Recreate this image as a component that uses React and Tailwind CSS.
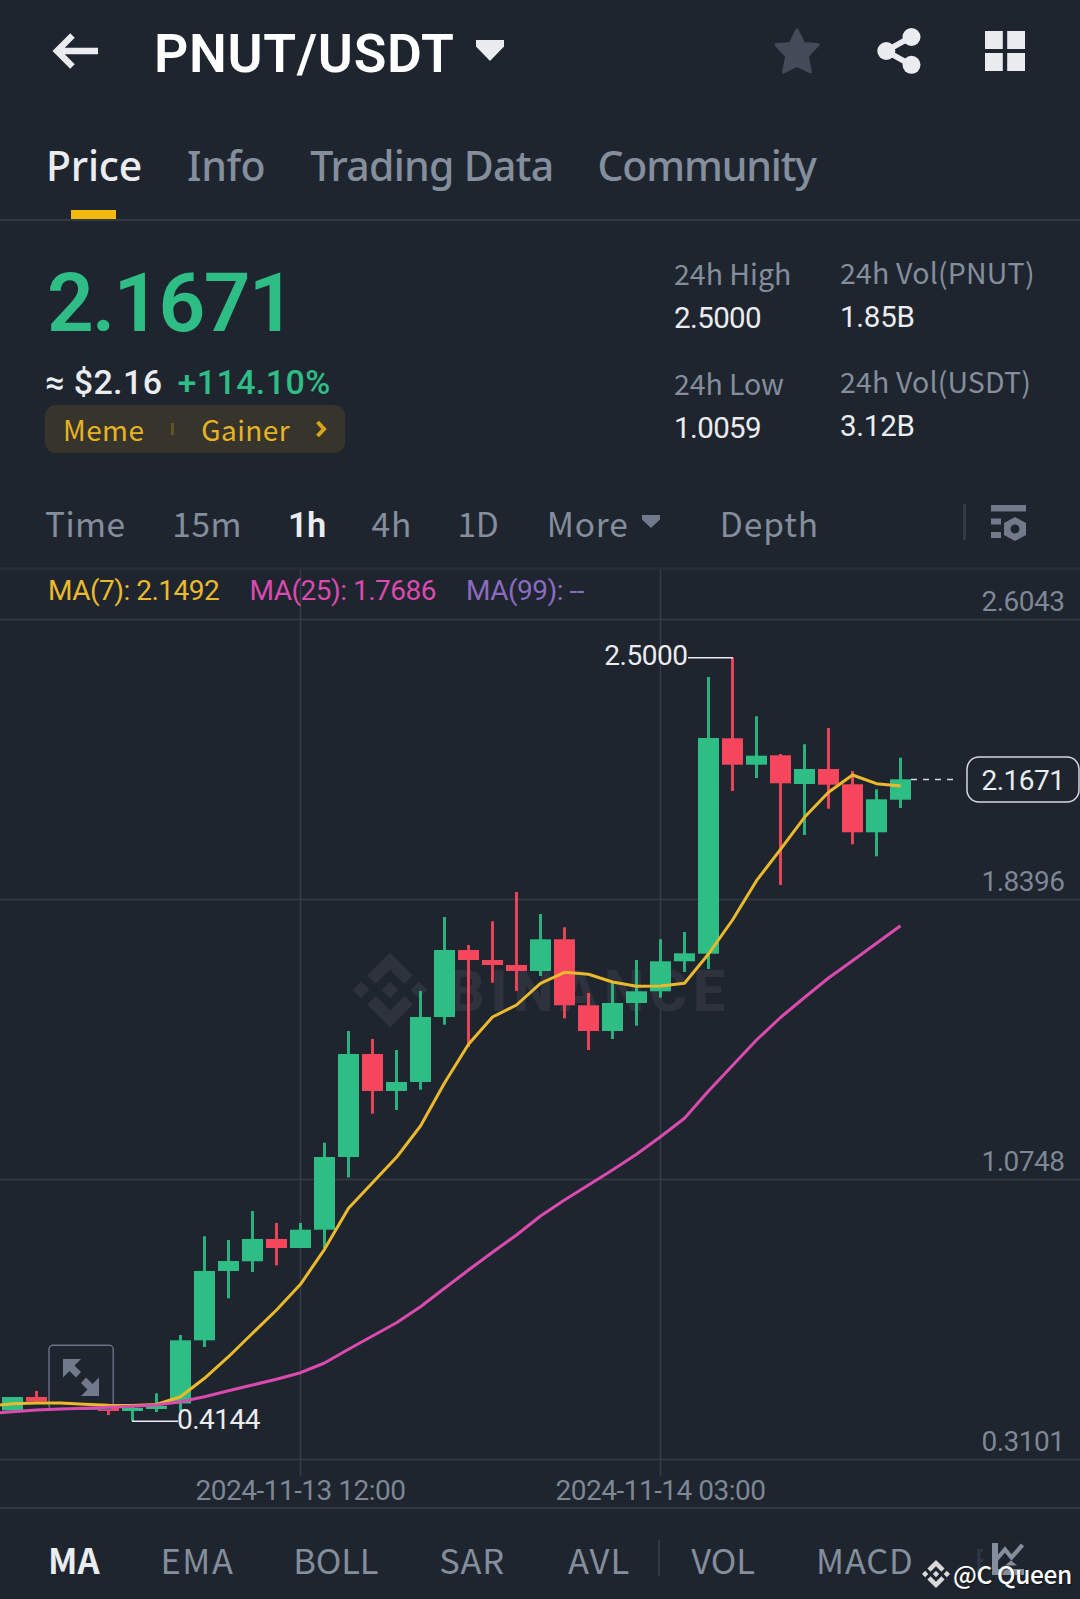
import React from 'react'
import clsx from 'clsx'

// x spacing between candles and x of the first candle centre
const STEP = 24
const FIRST_X = 12.5
const BODY_W = 21

// [up, bodyTop, bodyBottom, wickTop, wickBottom]
const candles = [
  [1, 1397, 1410.5, 1397, 1410.5],
  [0, 1397, 1401.5, 1391, 1401.5],
  [0, 1401, 1404, 1399, 1406],
  [0, 1404, 1408, 1401, 1410],
  [0, 1408, 1411, 1406, 1415],
  [1, 1408, 1411, 1406, 1421],
  [1, 1406, 1409, 1393.3, 1412],
  [1, 1340.3, 1403.5, 1335, 1411],
  [1, 1271, 1340.3, 1236.3, 1347],
  [1, 1261, 1271, 1240, 1298.3],
  [1, 1239, 1261.3, 1211, 1272],
  [0, 1239, 1248, 1223, 1265.3],
  [1, 1229.7, 1248, 1223, 1248],
  [1, 1157, 1229.7, 1142.7, 1248],
  [1, 1054, 1157, 1031, 1177.5],
  [0, 1054, 1091, 1039, 1113.7],
  [1, 1082, 1091, 1050, 1110],
  [1, 1017, 1082, 991, 1089.7],
  [1, 950, 1017, 917, 1024.7],
  [0, 950, 960, 945, 1047],
  [0, 960, 965, 921.3, 982.7],
  [0, 965, 971, 892, 991],
  [1, 939.3, 971, 914, 976],
  [0, 939.3, 1005.3, 927.3, 1018.3],
  [0, 1005.3, 1031, 993, 1050],
  [1, 1003, 1031, 983, 1039],
  [1, 991.3, 1003, 960, 1025.7],
  [1, 961.3, 991.3, 939.3, 997.7],
  [1, 953.3, 961.3, 932, 972],
  [1, 738, 953.7, 677, 969],
  [0, 738.3, 764.7, 657.7, 791],
  [1, 755.7, 764.7, 716.3, 778],
  [0, 755.3, 783.3, 754, 885],
  [1, 769, 784, 744.3, 835],
  [0, 769, 784.7, 728, 808.7],
  [0, 784.3, 832.3, 771, 844.3],
  [1, 799.3, 832.3, 789.3, 856.3],
  [1, 779.3, 799.7, 757.7, 808],
]

const ma7 = [
  1403.7, 1403, 1403, 1404.3, 1405.3, 1405.5, 1404.5, 1396.7, 1378.3, 1356.7, 1333.3, 1310, 1284.3,
  1249.3, 1208.3, 1182.7, 1157.3, 1126, 1083, 1044.3, 1017, 1005, 983.3, 972.3, 974.3, 982, 986.3,
  986, 983.3, 954, 920, 880.7, 849.3, 817.3, 792.3, 775, 783.7, 786,
]

const ma25 = [
  1411.7, 1410, 1409, 1408.3, 1407.3, 1406.3, 1405, 1401.7, 1396.7, 1390.7, 1385, 1379.3, 1372.7,
  1363, 1349.3, 1336, 1322.7, 1306.7, 1288.3, 1270, 1252.3, 1235, 1216, 1200, 1185, 1170, 1154.3,
  1136.7, 1118.3, 1091, 1065.5, 1040, 1017.5, 997.5, 978, 960.7, 943.3, 925.7,
]

const gridRows = [
  { y: 619.5, label: '2.6043' },
  { y: 899.5, label: '1.8396' },
  { y: 1179.5, label: '1.0748' },
  { y: 1459.5, label: '0.3101' },
]

const gridCols = [
  { x: 300.5, label: '2024-11-13 12:00' },
  { x: 660.5, label: '2024-11-14 03:00' },
]

const tabs = [
  { label: 'Price', cls: 'ml-[46px] tracking-[-0.2px] text-[#eaecef]', active: true },
  { label: 'Info', cls: 'ml-[45px] tracking-[-0.45px]' },
  { label: 'Trading Data', cls: 'ml-[45px] tracking-[-0.72px]' },
  { label: 'Community', cls: 'ml-[44px] tracking-[-1.12px]' },
]

const intervals = [
  { label: 'Time', cls: 'ml-[45px] tracking-[0.37px]' },
  { label: '15m', cls: 'ml-[47px] tracking-[0.5px]' },
  { label: '1h', cls: 'ml-[46px] tracking-[-0.8px]', active: true },
  { label: '4h', cls: 'ml-[46px] tracking-[1px]' },
  { label: '1D', cls: 'ml-[45px] tracking-[-0.2px]' },
  { label: 'More', cls: 'ml-[48px] tracking-[0.86px]', menu: true },
  { label: 'Depth', cls: 'ml-[60px] tracking-[0.9px]' },
]

const overlays = [
  { label: 'MA', cls: 'ml-[48px] tracking-[0px] font-semibold text-[#eaecef]' },
  { label: 'EMA', cls: 'ml-[61px] tracking-[1.5px]' },
  { label: 'BOLL', cls: 'ml-[59px] tracking-[-0.2px]' },
  { label: 'SAR', cls: 'ml-[61px] tracking-[0.73px]' },
  { label: 'AVL', cls: 'ml-[63px] tracking-[1.1px]' },
]

const LOGO =
  'M16.624 13.92l2.7175 2.7154-7.353 7.353-7.353-7.352 2.7175-2.7164 4.6355 4.6595 4.6356-4.6595zm4.6366-4.6366L24 12l-2.7154 2.7164L18.5682 12l2.6924-2.7164zm-9.272.001l2.7163 2.6914-2.7164 2.7174L9.2721 12l2.7164-2.7154zm-9.2722-.001L5.4088 12l-2.6914 2.6924L0 12l2.7164-2.7164zM11.9885.0115l7.353 7.329-2.7174 2.7154-4.6356-4.6356-4.6355 4.6595-2.7174-2.7154 7.353-7.353z'

const linePath = (values, startY) =>
  `M0 ${startY} ` + values.map((y, i) => `L${FIRST_X + i * STEP} ${y}`).join(' ')

function Header() {
  return (
    <header className="h-[102px] flex items-center text-[#eaecef]">
      <svg className="ml-[52px] w-[47px] h-[36px]" viewBox="0 0 47 36" fill="none" stroke="currentColor" strokeWidth="6.4">
        <path d="M20.5 2.5L5 18l15.500 15.500M5 18h41" />
      </svg>
      <h1 className="ml-[55px] pt-[5px] font-semibold text-[53.5px] leading-[64px] tracking-[0.66px] text-white">PNUT/USDT</h1>
      <svg className="ml-[21px] -mt-px w-[28px] h-[21px]" viewBox="0 0 28 21" fill="currentColor">
        <path d="M0 0h28v6.500L14 21 0 6.500z" />
      </svg>
      <svg className="ml-auto w-[46px] h-[46px] text-[#444c5a]" viewBox="0 0 46 46" fill="currentColor" stroke="currentColor" strokeWidth="3" strokeLinejoin="round">
        <path d="M23 2l6.600 13.400 14.400 1.300-10.800 11.400 3.300 15.900L23 37.300 9.500 44l3.300-15.900L2 16.700l14.400-1.300z" />
      </svg>
      <svg className="ml-[57px] w-[44px] h-[46px]" viewBox="0 0 44 46" fill="currentColor">
        <path d="M34 9L9 23l25 14" fill="none" stroke="currentColor" strokeWidth="5.600" />
        <circle cx="34.500" cy="9" r="9" />
        <circle cx="9.300" cy="23" r="9" />
        <circle cx="34.500" cy="36.800" r="9" />
      </svg>
      <svg className="ml-[64px] mr-[55px] w-[40px] h-[40px]" viewBox="0 0 40 40" fill="currentColor">
        <path d="M0 0h17.800v18H0zM22.200 0H40v18H22.200zM0 22h17.800v18H0zM22.200 22H40v18H22.200z" />
      </svg>
    </header>
  )
}

function Tabs() {
  return (
    <nav className="h-[119px] flex border-b-2 border-[#323944] font-['Noto_Sans',sans-serif] font-medium text-[41px] text-[#848e9c]">
      {tabs.map((tab) => (
        <div key={tab.label} className={clsx('relative pt-[33px] leading-[60px] whitespace-nowrap', tab.cls)}>
          {tab.label}
          {tab.active && <span className="absolute bottom-0 left-[25px] w-[45px] h-[9px] bg-[#f0b90b]" />}
        </div>
      ))}
    </nav>
  )
}

function Stat({ label, value, labelCls, valueCls }) {
  return (
    <div>
      <p className={clsx("font-['Noto_Sans_CJK_SC',sans-serif] text-[28.5px] leading-[36px] whitespace-nowrap text-[#848e9c]", labelCls)}>{label}</p>
      <p className={clsx('mt-[9px] text-[29.5px] leading-[36px] text-[#eaecef]', valueCls)}>{value}</p>
    </div>
  )
}

function Summary() {
  return (
    <section className="h-[259px] flex">
      <div className="ml-[45px] w-[629px] pt-[40px]">
        <p className="pl-[2px] font-semibold text-[82px] leading-[84px] tracking-[-1.8px] text-[#2ebd85]">2.1671</p>
        <p className="mt-[15px] flex font-medium text-[34px] leading-[44px] tracking-[0.4px]">
          <span className="text-[#eaecef]">≈ $2.16</span>
          <span className="ml-[15px] text-[#2ebd85]">+114.10%</span>
        </p>
        <div className="mt-px w-[300px] h-[48px] flex items-center rounded-[11px] bg-[#36342b] font-['Noto_Sans_CJK_SC',sans-serif] text-[28px] leading-[46px] tracking-[0.4px] text-[#e6b325]">
          <span className="ml-[18px] pb-px">Meme</span>
          <span className="ml-[27px] w-[3px] h-[12px] bg-[#665222]" />
          <span className="ml-[27px] pb-px">Gainer</span>
          <svg className="ml-[25px] w-[13px] h-[18px]" viewBox="0 0 13 18" fill="none" stroke="#d9a41a" strokeWidth="4">
            <path d="M2.500 2l6.500 7-6.500 7" />
          </svg>
        </div>
      </div>
      <div className="w-[166px] pt-[34px] flex flex-col gap-[29px]">
        <Stat label="24h High" value="2.5000" valueCls="tracking-[-0.6px]" />
        <Stat label="24h Low" value="1.0059" labelCls="tracking-[-0.1px]" valueCls="tracking-[-0.6px]" />
      </div>
      <div className="pt-[33px] flex flex-col gap-[28px]">
        <Stat label="24h Vol(PNUT)" value="1.85B" labelCls="tracking-[0.2px]" valueCls="tracking-[-0.25px]" />
        <Stat label="24h Vol(USDT)" value="3.12B" labelCls="tracking-[0.15px]" valueCls="tracking-[-0.25px]" />
      </div>
    </section>
  )
}

function Intervals() {
  return (
    <div className="h-[87px] pt-[21px] flex items-start text-[#848e9c]">
      <div className="flex items-baseline">
        {intervals.map((item) => (
          <div
            key={item.label}
            className={clsx(
              'flex items-baseline leading-[44px]',
              item.active
                ? 'font-semibold text-[34.5px] text-[#eaecef]'
                : "font-['Noto_Sans_CJK_SC',sans-serif] text-[33.5px]",
              item.cls
            )}
          >
            {item.label}
            {item.menu && (
              <svg className="ml-[13px] self-start mt-[14px] w-[18px] h-[13px]" viewBox="0 0 18 13" fill="#707a8a">
                <path d="M0 0h18v4.500L9 13 0 4.500z" />
              </svg>
            )}
          </div>
        ))}
      </div>
      <div className="ml-auto mt-[3px] w-[3px] h-[36px] bg-[#323944]" />
      <svg className="ml-[25px] mr-[54px] mt-[4px] w-[35px] h-[36px]" viewBox="0 0 35 36" fill="#707a8a">
        <path d="M0 0h35v6.500H0zM0 13.500h10v6H0zM0 27h10v6H0z" />
        <path fillRule="evenodd" d="M24 12l11 6v12l-11 6-11-6V18zm0 7.500a4.500 4.500 0 100 9 4.500 4.500 0 000-9z" />
      </svg>
    </div>
  )
}

function Chart() {
  return (
    <svg className="block w-[1080px] h-[940px] border-t-[3px] border-[#272d38]" viewBox="0 570 1080 937" fontSize="28" letterSpacing="-0.5">
      <g stroke="#363c48" strokeWidth="1.5">
        {gridRows.map((row) => <line key={row.y} x1="0" x2="1080" y1={row.y} y2={row.y} />)}
        {gridCols.map((col) => <line key={col.x} x1={col.x} x2={col.x} y1="570" y2="1476" />)}
      </g>

      {/* Watermark under the candles */}
      <g fill="#2d323d">
        <path transform="translate(352.700 952.700) scale(3.11)" d={LOGO} />
        <text x="448" y="1010.500" fontSize="57" fontWeight="800" textLength="277" letterSpacing="0">BINANCE</text>
      </g>

      {candles.map(([up, top, bottom, high, low], i) => {
        const x = FIRST_X + i * STEP
        return (
          <g key={i} fill={up ? '#2ebd85' : '#f6465d'}>
            <rect x={x - 1.5} y={high} width="3" height={low - high} opacity="0.92" />
            <rect x={x - BODY_W / 2} y={top} width={BODY_W} height={bottom - top} />
          </g>
        )
      })}

      {/* Fullscreen button */}
      <rect x="49" y="1345.200" width="64.200" height="64.200" rx="4" fill="#1f252f" stroke="#687284" strokeWidth="1.400" />
      <path
        d="M63 1359h18l-6.500 6.500 6.500 6.500-5 5.500-6.500-6.500-6.500 6.500zM99 1396H81l6.500-6.500-6.500-6.500 5-5.500 6.500 6.500 6.500-6.500z"
        fill="#707a8a"
      />

      <g fill="none" strokeWidth="3" strokeLinejoin="round">
        <path d={linePath(ma7, 1405)} stroke="#ebba2c" />
        <path d={linePath(ma25, 1412.7)} stroke="#db4aae" />
      </g>

      {/* High and low markers */}
      <g fill="#eaecef" stroke="none">
        <rect x="688" y="657" width="45" height="1.500" />
        <text x="604.300" y="665">2.5000</text>
        <rect x="132" y="1420.500" width="46" height="1.500" />
        <text x="177" y="1428.500">0.4144</text>
      </g>

      <line x1="911" x2="953" y1="779.500" y2="779.500" stroke="#d5d8dd" strokeWidth="1.400" strokeDasharray="6" />
      <rect x="967" y="757" width="112" height="45" rx="12" fill="#1f252f" stroke="#d5d8dd" strokeWidth="1.500" />
      <text x="981.500" y="790" fill="#eaecef">2.1671</text>

      <g fill="#848e9c" fillOpacity="0.95">
        {gridRows.map((row) => <text key={row.label} x="981.500" y={row.y - 8.5}>{row.label}</text>)}
        {gridCols.map((col) => (
          <text key={col.label} x={col.x} y="1500" textAnchor="middle">{col.label}</text>
        ))}
      </g>

      <text x="48" y="599.700" fill="#ebba2c">MA(7): 2.1492</text>
      <text x="249.500" y="599.700" fill="#db4aae">MA(25): 1.7686</text>
      <text x="466" y="599.700" fill="#8a6bbf">MA(99): --</text>
    </svg>
  )
}

function Indicators() {
  return (
    <div className="relative h-[92px] pt-[28px] flex items-start border-t-2 border-[#323944] font-['Noto_Sans_CJK_SC',sans-serif] text-[34.5px] leading-[44px] text-[#848e9c]">
      {overlays.map((item) => <span key={item.label} className={item.cls}>{item.label}</span>)}
      <span className="ml-[28px] mt-[3px] w-[2px] h-[36px] bg-[#323944]" />
      <span className="ml-[31px]">VOL</span>
      <span className="ml-[61px] tracking-[0.8px]">MACD</span>
      <span className="ml-[60px] w-[9px] overflow-hidden text-[#2f3641]">E</span>
      <svg className="ml-[9px] mt-[6px] w-[32px] h-[32px]" viewBox="0 0 32 32" fill="#848e9c">
        <path d="M0 0h6v26h26v6H0z" />
        <path d="M4 17l9-10.500 6.500 8L30.500 2" fill="none" stroke="#848e9c" strokeWidth="4.200" />
        <path d="M19 17.500l6 5H13z" />
      </svg>

      {/* Author mark */}
      <div className="absolute left-[922px] top-[50px] flex items-center text-white">
        <svg className="w-[28px] h-[28px]" viewBox="0 0 24 24" fill="#d9d9da"><path d={LOGO} /></svg>
        <span className="ml-[3px] font-medium text-[24.5px] leading-[30px] tracking-[-0.36px] whitespace-nowrap [text-shadow:1px_1px_1px_#00000099]">@C Queen</span>
      </div>
    </div>
  )
}

export default function App() {
  return (
    <div className="w-[1080px] h-[1599px] overflow-hidden bg-[#1f252f] font-['Roboto',sans-serif]">
      <Header />
      <Tabs />
      <Summary />
      <Intervals />
      <Chart />
      <Indicators />
    </div>
  )
}
